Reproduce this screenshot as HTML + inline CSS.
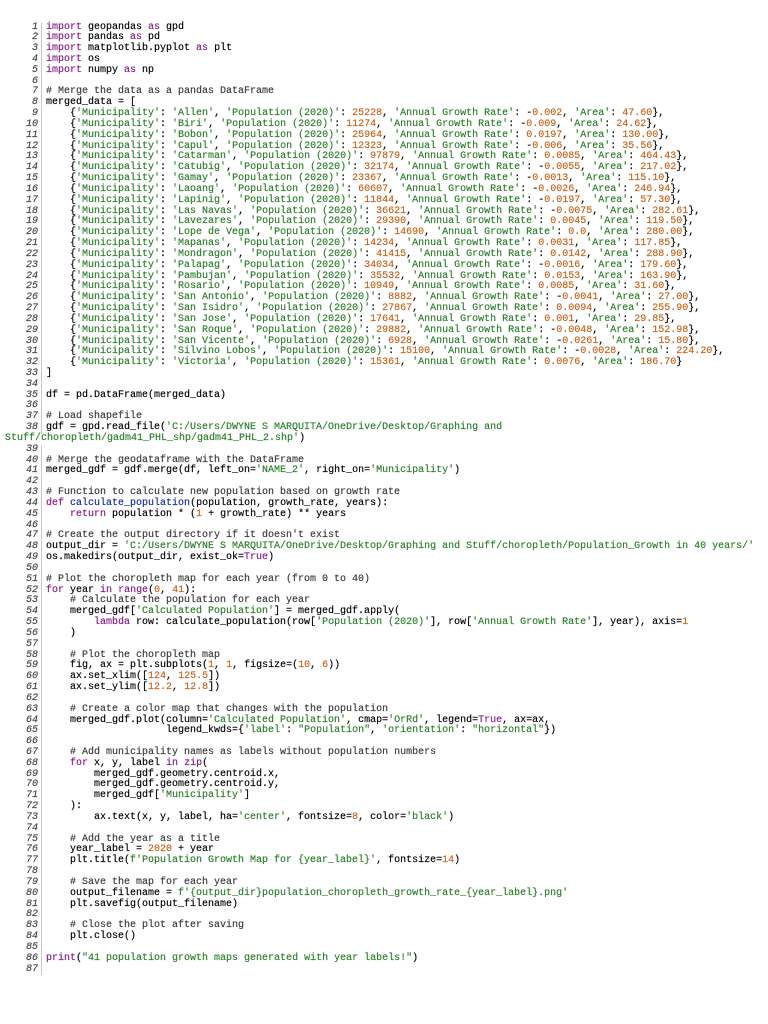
<!DOCTYPE html>
<html><head><meta charset="utf-8"><style>
html,body{margin:0;padding:0;background:#fff;width:768px;height:1024px;overflow:hidden}
#w{position:absolute;top:22.5px;left:0;font-family:"Liberation Mono",monospace;font-size:10px;line-height:10.84px;color:#000;-webkit-text-stroke:0.15px currentColor}
.r{display:flex;height:10.84px}
.r i{width:38px;text-align:right;color:#444;font-style:italic;flex:none}
.r p{margin:0 0 0 3px;padding-left:4px;border-left:1px solid #c8c8c8;white-space:pre;flex:none}
.x{white-space:pre;padding-left:5px;height:10.84px}
.k{color:#8b1a89}.g{color:#2a7d2a}.o{color:#c5621a}.c{color:#3a3a3a}.b{color:#1a2aa0}
</style></head><body><div id="w">
<div class="r"><i>1</i><p><span class="k">import</span> geopandas <span class="k">as</span> gpd</p></div>
<div class="r"><i>2</i><p><span class="k">import</span> pandas <span class="k">as</span> pd</p></div>
<div class="r"><i>3</i><p><span class="k">import</span> matplotlib.pyplot <span class="k">as</span> plt</p></div>
<div class="r"><i>4</i><p><span class="k">import</span> os</p></div>
<div class="r"><i>5</i><p><span class="k">import</span> numpy <span class="k">as</span> np</p></div>
<div class="r"><i>6</i><p> </p></div>
<div class="r"><i>7</i><p><span class="c"># Merge the data as a pandas DataFrame</span></p></div>
<div class="r"><i>8</i><p>merged_data = [</p></div>
<div class="r"><i>9</i><p>    {<span class="g">'Municipality'</span>: <span class="g">'Allen'</span>, <span class="g">'Population (2020)'</span>: <span class="o">25228</span>, <span class="g">'Annual Growth Rate'</span>: -<span class="o">0.002</span>, <span class="g">'Area'</span>: <span class="o">47.60</span>},</p></div>
<div class="r"><i>10</i><p>    {<span class="g">'Municipality'</span>: <span class="g">'Biri'</span>, <span class="g">'Population (2020)'</span>: <span class="o">11274</span>, <span class="g">'Annual Growth Rate'</span>: -<span class="o">0.009</span>, <span class="g">'Area'</span>: <span class="o">24.62</span>},</p></div>
<div class="r"><i>11</i><p>    {<span class="g">'Municipality'</span>: <span class="g">'Bobon'</span>, <span class="g">'Population (2020)'</span>: <span class="o">25964</span>, <span class="g">'Annual Growth Rate'</span>: <span class="o">0.0197</span>, <span class="g">'Area'</span>: <span class="o">130.00</span>},</p></div>
<div class="r"><i>12</i><p>    {<span class="g">'Municipality'</span>: <span class="g">'Capul'</span>, <span class="g">'Population (2020)'</span>: <span class="o">12323</span>, <span class="g">'Annual Growth Rate'</span>: -<span class="o">0.006</span>, <span class="g">'Area'</span>: <span class="o">35.56</span>},</p></div>
<div class="r"><i>13</i><p>    {<span class="g">'Municipality'</span>: <span class="g">'Catarman'</span>, <span class="g">'Population (2020)'</span>: <span class="o">97879</span>, <span class="g">'Annual Growth Rate'</span>: <span class="o">0.0085</span>, <span class="g">'Area'</span>: <span class="o">464.43</span>},</p></div>
<div class="r"><i>14</i><p>    {<span class="g">'Municipality'</span>: <span class="g">'Catubig'</span>, <span class="g">'Population (2020)'</span>: <span class="o">32174</span>, <span class="g">'Annual Growth Rate'</span>: -<span class="o">0.0055</span>, <span class="g">'Area'</span>: <span class="o">217.02</span>},</p></div>
<div class="r"><i>15</i><p>    {<span class="g">'Municipality'</span>: <span class="g">'Gamay'</span>, <span class="g">'Population (2020)'</span>: <span class="o">23367</span>, <span class="g">'Annual Growth Rate'</span>: -<span class="o">0.0013</span>, <span class="g">'Area'</span>: <span class="o">115.10</span>},</p></div>
<div class="r"><i>16</i><p>    {<span class="g">'Municipality'</span>: <span class="g">'Laoang'</span>, <span class="g">'Population (2020)'</span>: <span class="o">60607</span>, <span class="g">'Annual Growth Rate'</span>: -<span class="o">0.0026</span>, <span class="g">'Area'</span>: <span class="o">246.94</span>},</p></div>
<div class="r"><i>17</i><p>    {<span class="g">'Municipality'</span>: <span class="g">'Lapinig'</span>, <span class="g">'Population (2020)'</span>: <span class="o">11844</span>, <span class="g">'Annual Growth Rate'</span>: -<span class="o">0.0197</span>, <span class="g">'Area'</span>: <span class="o">57.30</span>},</p></div>
<div class="r"><i>18</i><p>    {<span class="g">'Municipality'</span>: <span class="g">'Las Navas'</span>, <span class="g">'Population (2020)'</span>: <span class="o">36621</span>, <span class="g">'Annual Growth Rate'</span>: -<span class="o">0.0075</span>, <span class="g">'Area'</span>: <span class="o">282.61</span>},</p></div>
<div class="r"><i>19</i><p>    {<span class="g">'Municipality'</span>: <span class="g">'Lavezares'</span>, <span class="g">'Population (2020)'</span>: <span class="o">29390</span>, <span class="g">'Annual Growth Rate'</span>: <span class="o">0.0045</span>, <span class="g">'Area'</span>: <span class="o">119.50</span>},</p></div>
<div class="r"><i>20</i><p>    {<span class="g">'Municipality'</span>: <span class="g">'Lope de Vega'</span>, <span class="g">'Population (2020)'</span>: <span class="o">14690</span>, <span class="g">'Annual Growth Rate'</span>: <span class="o">0.0</span>, <span class="g">'Area'</span>: <span class="o">280.00</span>},</p></div>
<div class="r"><i>21</i><p>    {<span class="g">'Municipality'</span>: <span class="g">'Mapanas'</span>, <span class="g">'Population (2020)'</span>: <span class="o">14234</span>, <span class="g">'Annual Growth Rate'</span>: <span class="o">0.0031</span>, <span class="g">'Area'</span>: <span class="o">117.85</span>},</p></div>
<div class="r"><i>22</i><p>    {<span class="g">'Municipality'</span>: <span class="g">'Mondragon'</span>, <span class="g">'Population (2020)'</span>: <span class="o">41415</span>, <span class="g">'Annual Growth Rate'</span>: <span class="o">0.0142</span>, <span class="g">'Area'</span>: <span class="o">288.90</span>},</p></div>
<div class="r"><i>23</i><p>    {<span class="g">'Municipality'</span>: <span class="g">'Palapag'</span>, <span class="g">'Population (2020)'</span>: <span class="o">34034</span>, <span class="g">'Annual Growth Rate'</span>: -<span class="o">0.0016</span>, <span class="g">'Area'</span>: <span class="o">179.60</span>},</p></div>
<div class="r"><i>24</i><p>    {<span class="g">'Municipality'</span>: <span class="g">'Pambujan'</span>, <span class="g">'Population (2020)'</span>: <span class="o">35532</span>, <span class="g">'Annual Growth Rate'</span>: <span class="o">0.0153</span>, <span class="g">'Area'</span>: <span class="o">163.90</span>},</p></div>
<div class="r"><i>25</i><p>    {<span class="g">'Municipality'</span>: <span class="g">'Rosario'</span>, <span class="g">'Population (2020)'</span>: <span class="o">10949</span>, <span class="g">'Annual Growth Rate'</span>: <span class="o">0.0085</span>, <span class="g">'Area'</span>: <span class="o">31.60</span>},</p></div>
<div class="r"><i>26</i><p>    {<span class="g">'Municipality'</span>: <span class="g">'San Antonio'</span>, <span class="g">'Population (2020)'</span>: <span class="o">8882</span>, <span class="g">'Annual Growth Rate'</span>: -<span class="o">0.0041</span>, <span class="g">'Area'</span>: <span class="o">27.00</span>},</p></div>
<div class="r"><i>27</i><p>    {<span class="g">'Municipality'</span>: <span class="g">'San Isidro'</span>, <span class="g">'Population (2020)'</span>: <span class="o">27867</span>, <span class="g">'Annual Growth Rate'</span>: <span class="o">0.0094</span>, <span class="g">'Area'</span>: <span class="o">255.90</span>},</p></div>
<div class="r"><i>28</i><p>    {<span class="g">'Municipality'</span>: <span class="g">'San Jose'</span>, <span class="g">'Population (2020)'</span>: <span class="o">17641</span>, <span class="g">'Annual Growth Rate'</span>: <span class="o">0.001</span>, <span class="g">'Area'</span>: <span class="o">29.85</span>},</p></div>
<div class="r"><i>29</i><p>    {<span class="g">'Municipality'</span>: <span class="g">'San Roque'</span>, <span class="g">'Population (2020)'</span>: <span class="o">29882</span>, <span class="g">'Annual Growth Rate'</span>: -<span class="o">0.0048</span>, <span class="g">'Area'</span>: <span class="o">152.98</span>},</p></div>
<div class="r"><i>30</i><p>    {<span class="g">'Municipality'</span>: <span class="g">'San Vicente'</span>, <span class="g">'Population (2020)'</span>: <span class="o">6928</span>, <span class="g">'Annual Growth Rate'</span>: -<span class="o">0.0261</span>, <span class="g">'Area'</span>: <span class="o">15.80</span>},</p></div>
<div class="r"><i>31</i><p>    {<span class="g">'Municipality'</span>: <span class="g">'Silvino Lobos'</span>, <span class="g">'Population (2020)'</span>: <span class="o">15100</span>, <span class="g">'Annual Growth Rate'</span>: -<span class="o">0.0028</span>, <span class="g">'Area'</span>: <span class="o">224.20</span>},</p></div>
<div class="r"><i>32</i><p>    {<span class="g">'Municipality'</span>: <span class="g">'Victoria'</span>, <span class="g">'Population (2020)'</span>: <span class="o">15361</span>, <span class="g">'Annual Growth Rate'</span>: <span class="o">0.0076</span>, <span class="g">'Area'</span>: <span class="o">186.70</span>}</p></div>
<div class="r"><i>33</i><p>]</p></div>
<div class="r"><i>34</i><p> </p></div>
<div class="r"><i>35</i><p>df = pd.DataFrame(merged_data)</p></div>
<div class="r"><i>36</i><p> </p></div>
<div class="r"><i>37</i><p><span class="c"># Load shapefile</span></p></div>
<div class="r"><i>38</i><p>gdf = gpd.read_file(<span class="g">'C:/Users/DWYNE S MARQUITA/OneDrive/Desktop/Graphing and</span></p></div>
<div class="x"><span class="g">Stuff/choropleth/gadm41_PHL_shp/gadm41_PHL_2.shp'</span>)</div>
<div class="r"><i>39</i><p> </p></div>
<div class="r"><i>40</i><p><span class="c"># Merge the geodataframe with the DataFrame</span></p></div>
<div class="r"><i>41</i><p>merged_gdf = gdf.merge(df, left_on=<span class="g">'NAME_2'</span>, right_on=<span class="g">'Municipality'</span>)</p></div>
<div class="r"><i>42</i><p> </p></div>
<div class="r"><i>43</i><p><span class="c"># Function to calculate new population based on growth rate</span></p></div>
<div class="r"><i>44</i><p><span class="k">def</span> <span class="b">calculate_population</span>(population, growth_rate, years):</p></div>
<div class="r"><i>45</i><p>    <span class="k">return</span> population * (<span class="o">1</span> + growth_rate) ** years</p></div>
<div class="r"><i>46</i><p> </p></div>
<div class="r"><i>47</i><p><span class="c"># Create the output directory if it doesn't exist</span></p></div>
<div class="r"><i>48</i><p>output_dir = <span class="g">'C:/Users/DWYNE S MARQUITA/OneDrive/Desktop/Graphing and Stuff/choropleth/Population_Growth in 40 years/'</span></p></div>
<div class="r"><i>49</i><p>os.makedirs(output_dir, exist_ok=<span class="k">True</span>)</p></div>
<div class="r"><i>50</i><p> </p></div>
<div class="r"><i>51</i><p><span class="c"># Plot the choropleth map for each year (from 0 to 40)</span></p></div>
<div class="r"><i>52</i><p><span class="k">for</span> year <span class="k">in</span> <span class="k">range</span>(<span class="o">0</span>, <span class="o">41</span>):</p></div>
<div class="r"><i>53</i><p>    <span class="c"># Calculate the population for each year</span></p></div>
<div class="r"><i>54</i><p>    merged_gdf[<span class="g">'Calculated Population'</span>] = merged_gdf.apply(</p></div>
<div class="r"><i>55</i><p>        <span class="k">lambda</span> row: calculate_population(row[<span class="g">'Population (2020)'</span>], row[<span class="g">'Annual Growth Rate'</span>], year), axis=<span class="o">1</span></p></div>
<div class="r"><i>56</i><p>    )</p></div>
<div class="r"><i>57</i><p> </p></div>
<div class="r"><i>58</i><p>    <span class="c"># Plot the choropleth map</span></p></div>
<div class="r"><i>59</i><p>    fig, ax = plt.subplots(<span class="o">1</span>, <span class="o">1</span>, figsize=(<span class="o">10</span>, <span class="o">6</span>))</p></div>
<div class="r"><i>60</i><p>    ax.set_xlim([<span class="o">124</span>, <span class="o">125.5</span>])</p></div>
<div class="r"><i>61</i><p>    ax.set_ylim([<span class="o">12.2</span>, <span class="o">12.8</span>])</p></div>
<div class="r"><i>62</i><p> </p></div>
<div class="r"><i>63</i><p>    <span class="c"># Create a color map that changes with the population</span></p></div>
<div class="r"><i>64</i><p>    merged_gdf.plot(column=<span class="g">'Calculated Population'</span>, cmap=<span class="g">'OrRd'</span>, legend=<span class="k">True</span>, ax=ax,</p></div>
<div class="r"><i>65</i><p>                    legend_kwds={<span class="g">'label'</span>: <span class="g">"Population"</span>, <span class="g">'orientation'</span>: <span class="g">"horizontal"</span>})</p></div>
<div class="r"><i>66</i><p> </p></div>
<div class="r"><i>67</i><p>    <span class="c"># Add municipality names as labels without population numbers</span></p></div>
<div class="r"><i>68</i><p>    <span class="k">for</span> x, y, label <span class="k">in</span> <span class="k">zip</span>(</p></div>
<div class="r"><i>69</i><p>        merged_gdf.geometry.centroid.x,</p></div>
<div class="r"><i>70</i><p>        merged_gdf.geometry.centroid.y,</p></div>
<div class="r"><i>71</i><p>        merged_gdf[<span class="g">'Municipality'</span>]</p></div>
<div class="r"><i>72</i><p>    ):</p></div>
<div class="r"><i>73</i><p>        ax.text(x, y, label, ha=<span class="g">'center'</span>, fontsize=<span class="o">8</span>, color=<span class="g">'black'</span>)</p></div>
<div class="r"><i>74</i><p> </p></div>
<div class="r"><i>75</i><p>    <span class="c"># Add the year as a title</span></p></div>
<div class="r"><i>76</i><p>    year_label = <span class="o">2020</span> + year</p></div>
<div class="r"><i>77</i><p>    plt.title(<span class="g">f'Population Growth Map for {year_label}'</span>, fontsize=<span class="o">14</span>)</p></div>
<div class="r"><i>78</i><p> </p></div>
<div class="r"><i>79</i><p>    <span class="c"># Save the map for each year</span></p></div>
<div class="r"><i>80</i><p>    output_filename = <span class="g">f'{output_dir}population_choropleth_growth_rate_{year_label}.png'</span></p></div>
<div class="r"><i>81</i><p>    plt.savefig(output_filename)</p></div>
<div class="r"><i>82</i><p> </p></div>
<div class="r"><i>83</i><p>    <span class="c"># Close the plot after saving</span></p></div>
<div class="r"><i>84</i><p>    plt.close()</p></div>
<div class="r"><i>85</i><p> </p></div>
<div class="r"><i>86</i><p><span class="k">print</span>(<span class="g">"41 population growth maps generated with year labels!"</span>)</p></div>
<div class="r"><i>87</i><p> </p></div>
</div></body></html>
